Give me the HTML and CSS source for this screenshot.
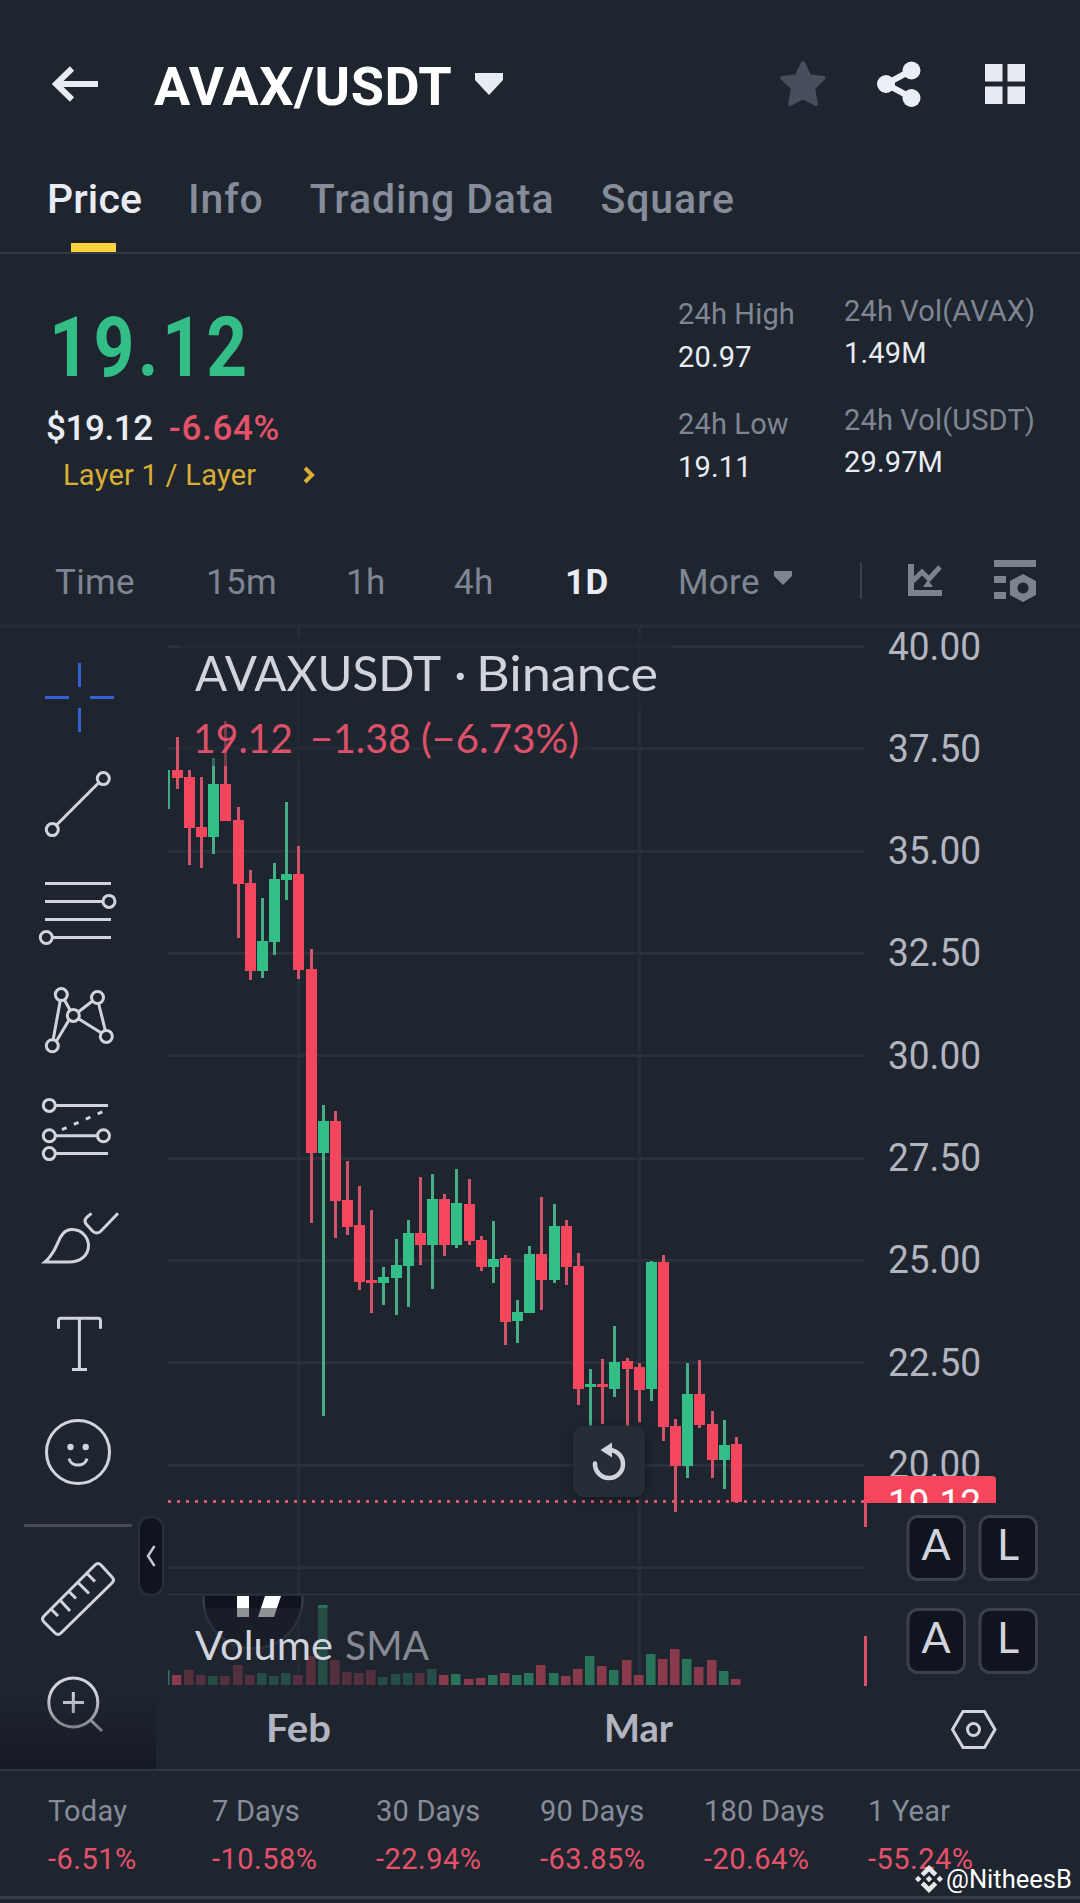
FILE: index.html
```html
<!DOCTYPE html>
<html lang="en">
<head>
    <meta charset="UTF-8">
    <title>AVAX/USDT</title>
    <link rel="stylesheet" href="styles.css">
</head>
<body>
<header class="header">
    <svg class="back" width="46" height="36" viewBox="0 0 46 36"><path d="M20 2.5L4 18l16 15.5M4 18h42" fill="none" stroke="#e9ebf2" stroke-width="6"/></svg>
    <h1 class="pair">AVAX/USDT</h1>
    <svg width="28" height="22" viewBox="0 0 28 22"><path d="M0 0h28v7L14 22 0 7z" fill="#e9ebf2"/></svg>
    <div class="header-actions">
        <svg width="46" height="48" viewBox="0 0 46 48"><path d="M23 3l6.300 13.200 14.200 1.800-10.400 10L35.900 44 23 37.200 10.100 44l2.800-16L2.500 18l14.200-1.800z" fill="#474f5d" stroke="#474f5d" stroke-width="4" stroke-linejoin="round"/></svg>
        <svg class="share" width="44" height="48" viewBox="0 0 44 48"><path d="M35 10L9 24l26 14" fill="none" stroke="#eceef5" stroke-width="6"/><g fill="#eceef5"><circle cx="34.500" cy="10.500" r="9"/><circle cx="9" cy="24" r="9"/><circle cx="34.500" cy="38" r="9"/></g></svg>
        <svg class="tiles" width="40" height="40" viewBox="0 0 40 40"><path d="M0 0h17.500v17.500H0zM22.500 0H40v17.500H22.500zM0 22.500h17.500V40H0zM22.500 22.500H40V40H22.500z" fill="#e9ebf2"/></svg>
    </div>
</header>

<nav class="tabs">
    <a class="tab active">Price</a>
    <a class="tab">Info</a>
    <a class="tab">Trading Data</a>
    <a class="tab">Square</a>
</nav>

<section class="ticker">
    <div class="ticker-main">
        <div class="last-price">19.12</div>
        <div class="fiat"><span class="fiat-price">$19.12</span><span class="change">-6.64%</span></div>
        <div class="tag">Layer 1 / Layer
            <svg width="12" height="18" viewBox="0 0 12 18"><path d="M2 2l7 7-7 7" fill="none" stroke="#d9ae33" stroke-width="4"/></svg>
        </div>
    </div>
    <dl class="stats">
        <dt>24h High</dt>
        <dd>20.97</dd>
        <dt>24h Low</dt>
        <dd>19.11</dd>
    </dl>
    <dl class="stats stats-vol">
        <dt>24h Vol(AVAX)</dt>
        <dd>1.49M</dd>
        <dt>24h Vol(USDT)</dt>
        <dd>29.97M</dd>
    </dl>
</section>

<nav class="intervals">
    <a>Time</a>
    <a>15m</a>
    <a>1h</a>
    <a>4h</a>
    <a class="active">1D</a>
    <a>More <svg class="caret" width="18" height="14" viewBox="0 0 18 14"><path d="M0 0h18v5L9 14 0 5z" fill="#7f8593"/></svg></a>
    <span class="separator"></span>
    <svg class="interval-icon" width="34" height="34" viewBox="0 0 34 34"><path d="M3 0v29h31" fill="none" stroke="#7b8290" stroke-width="6"/><path d="M5 17l9-9 7 7L32 3" fill="none" stroke="#7b8290" stroke-width="5"/><path d="M20 16l-5 7h10z" fill="#7b8290"/></svg>
    <svg class="interval-icon" width="42" height="42" viewBox="0 0 42 42"><path d="M0 0h42v7H0zM0 16h12v7H0zM0 32h12v7H0z" fill="#7b8290"/><path fill-rule="evenodd" d="M29 14l13 7v14l-13 7-13-7V21zM29 22.500a5.500 5.500 0 1 0 .01 0z" fill="#7b8290"/></svg>
</nav>

<main class="chart">
    <div class="tools">
        <svg class="tool" viewBox="0 0 156 108"><path class="cross" d="M79.500 20v24M79.500 65v24M45 54.500h24M90 54.500h24"/></svg>
        <svg class="tool" viewBox="0 0 156 108"><circle cx="103.300" cy="27.600" r="6"/><circle cx="52.300" cy="78.600" r="6"/><path d="M98.500 32l-42 42"/></svg>
        <svg class="tool" viewBox="0 0 156 108"><path d="M45 24.600h66M45 42.400h58M45 60.600h66M53 78.500h58"/><circle cx="109" cy="42.400" r="6"/><circle cx="46.300" cy="78.500" r="6"/></svg>
        <svg class="tool" viewBox="0 0 156 108"><circle cx="61.300" cy="27.600" r="6"/><circle cx="97.500" cy="30.500" r="6"/><circle cx="73.300" cy="48.400" r="6"/><circle cx="106.300" cy="69.400" r="6"/><circle cx="52.300" cy="78.700" r="6"/><path d="M60.200 34l-7 38.500M64.500 33l5.500 10M56.500 74l12.500-21M78.300 45l14.200-11M98.700 37l6.500 26M78.500 51.800l22.500 14"/></svg>
        <svg class="tool" viewBox="0 0 156 108"><circle cx="49.300" cy="30.400" r="6"/><circle cx="49.300" cy="60.700" r="6"/><circle cx="103.500" cy="60.700" r="6"/><circle cx="49.300" cy="78.600" r="6"/><path d="M56 30.400h52M56 60.700h41M56 78.600h52"/><path d="M62 54.600l42-18.500" stroke-dasharray="5 8"/></svg>
        <svg class="tool" viewBox="0 0 156 108"><path d="M45 79C52 73 55 66 60 55c3-6 8-9 13-8.500 9 .5 15.500 8 15.500 16 0 9-7 16.500-19.500 16.500zM91.500 30.300l-4.500 3.700c-2.500 2.500-2.500 5.500 0 8l5.500 6c2.500 2.500 6 2.500 8.500 0L118 30.300"/></svg>
        <svg class="tool" viewBox="0 0 156 108"><path d="M58.500 37.700v-8q0-2.500 2.500-2.500h37q2.500 0 2.500 2.500v8M79.400 27.200v51M72 78.400h15"/></svg>
        <svg class="tool" viewBox="0 0 156 108"><circle cx="78" cy="53" r="31.500"/><circle class="dot" cx="70.500" cy="48" r="3.200"/><circle class="dot" cx="85.700" cy="48" r="3.200"/><path d="M69 59.600c2 8.500 16 8.500 18 0"/></svg>
        <hr class="tools-line">
        <svg class="tool tool-ruler" viewBox="0 0 156 122"><path d="M95 38q3-3 6 0l11 12q3 3 0 6L61 106q-3 3-6 0L44 95q-3-3 0-6zM51 82l7 7M60 73l10 11M69 64.500l7 7M78 55.500l11 11M87 46.500l8 8"/></svg>
        <svg class="tool tool-zoom" viewBox="0 0 156 119"><circle cx="73.300" cy="53.400" r="24.500"/><path d="M90.500 71L102 82M63 53.400h21M73.300 43v21"/></svg>
        <div class="tools-fade"></div>
        <button class="collapse"><svg width="10" height="22" viewBox="0 0 10 22"><path d="M8.500 1L2 11l6.500 10" fill="none" stroke="#c3c6d0" stroke-width="2.500"/></svg></button>
    </div>

    <svg class="plot" viewBox="156 628 924 1141">
        <defs>
            <clipPath id="lower-pane"><rect x="168" y="1596" width="700" height="90"/></clipPath>
            <clipPath id="price-label"><path d="M864 1476h128q4 0 4 4v23H864z"/></clipPath>
        </defs>
        <g id="grid"></g>
        <path class="pane-line" d="M168 1594.500h912"/>

        <!-- TradingView mark, cut by the pane border -->
        <g clip-path="url(#lower-pane)">
            <circle cx="253" cy="1599" r="49.500" fill="#10141f" stroke="#363b46" stroke-width="2.500"/>
            <path d="M237 1596h12v21h-12zM265 1596h16l-7 21h-16z" fill="#fff"/>
        </g>

        <g id="volume"><rect x="168" y="1670" width="1.500" height="15" fill="#2a735b"/></g>
        <g id="candles"><rect x="168" y="770" width="2" height="39" fill="#3fae83"/></g>

        <path class="price-line" d="M168 1501.500h696"/>
        <g class="veil">
            <rect x="180" y="636" width="492" height="72"/>
            <rect x="180" y="708" width="412" height="58"/>
            <rect x="181" y="1608" width="257" height="79"/>
        </g>

        <g class="legend-title">
            <text x="195" y="691" textLength="246" lengthAdjust="spacingAndGlyphs">AVAXUSDT</text>
            <text x="454" y="691">·</text>
            <text x="476" y="691" textLength="182" lengthAdjust="spacingAndGlyphs">Binance</text>
        </g>
        <g class="legend-change">
            <text x="193" y="753" textLength="100" lengthAdjust="spacingAndGlyphs">19.12</text>
            <text x="310" y="753" textLength="101" lengthAdjust="spacingAndGlyphs">−1.38</text>
            <text x="421" y="753" textLength="158" lengthAdjust="spacingAndGlyphs">(−6.73%)</text>
        </g>
        <text class="legend-volume" x="195" y="1660" textLength="138" lengthAdjust="spacingAndGlyphs">Volume</text>
        <text class="legend-sma" x="345" y="1660" textLength="84" lengthAdjust="spacingAndGlyphs">SMA</text>

        <g id="prices"></g>
        <g clip-path="url(#price-label)">
            <rect x="864" y="1476" width="132" height="27" fill="#f6465d"/>
            <text class="price now" x="888" y="1517" textLength="93" lengthAdjust="spacingAndGlyphs">19.12</text>
        </g>
        <path class="tick" d="M865.500 1503v24M865.500 1636v50"/>

        <text class="month" x="266" y="1742" textLength="65" lengthAdjust="spacingAndGlyphs">Feb</text>
        <text class="month" x="604" y="1742" textLength="69" lengthAdjust="spacingAndGlyphs">Mar</text>

        <g class="scale-button">
            <rect x="908" y="1516.500" width="56.500" height="63" rx="10"/><text x="936" y="1560">A</text>
            <rect x="980" y="1516.500" width="56.500" height="63" rx="10"/><text x="1008" y="1560">L</text>
            <rect x="908" y="1609.500" width="56.500" height="63" rx="10"/><text x="936" y="1653">A</text>
            <rect x="980" y="1609.500" width="56.500" height="63" rx="10"/><text x="1008" y="1653">L</text>
        </g>
        <g fill="none" stroke="#d1d4dc" stroke-width="3">
            <path d="M963 1711.500h21.500l10.500 18-10.500 18H963l-10.500-18z"/>
            <circle cx="973.500" cy="1729.500" r="6"/>
        </g>

        <!-- reset button -->
        <rect class="reset" x="573" y="1425.500" width="72" height="71.500" rx="11"/>
        <path d="M595 1463.500a14 14 0 1 0 14-13.500" fill="none" stroke="#d1d4dc" stroke-width="4.500" stroke-linecap="round"/>
        <path d="M600.500 1450l11.500-7.500v15z" fill="#d1d4dc"/>
    </svg>
</main>

<footer class="periods">
    <div class="period"><span>Today</span><b>-6.51%</b></div>
    <div class="period"><span>7 Days</span><b>-10.58%</b></div>
    <div class="period"><span>30 Days</span><b>-22.94%</b></div>
    <div class="period"><span>90 Days</span><b>-63.85%</b></div>
    <div class="period"><span>180 Days</span><b>-20.64%</b></div>
    <div class="period"><span>1 Year</span><b>-55.24%</b></div>
    <div class="author">
        <svg width="28" height="28" viewBox="0 0 28 28" fill="#e8e8ea"><path d="M14 0l8.300 8.300-3.200 3.200L14 6.400l-5.100 5.100-3.200-3.200zM14 28l-8.300-8.300 3.200-3.200 5.100 5.100 5.100-5.100 3.200 3.200zM3.200 10.800L6.400 14l-3.200 3.200L0 14zM24.800 10.800L28 14l-3.200 3.200-3.200-3.200zM14 10.800l3.200 3.200-3.200 3.200-3.200-3.200z"/></svg>
        <span>@NitheesB</span>
    </div>
</footer>
<script src="script.js"></script>
</body>
</html>
```
FILE: styles.css
```css
* {
    box-sizing: border-box;
}

body {
    margin: 0;
    width: 1080px;
    height: 1903px;
    overflow: hidden;
    background-color: #1f252f;
    color: #eaecf3;
    font-family: Roboto, "Liberation Sans", sans-serif;
}

svg {
    display: block;
    flex: none;
}

/* Header */
.header {
    height: 168px;
    padding: 0 55px 0 52px;
    display: flex;
    align-items: center;
}

.pair {
    margin: 0 23px 0 56px;
    padding-top: 5px;
    font-size: 54px;
    line-height: 64px;
    font-weight: 700;
    letter-spacing: 0.5px;
    color: #fff;
}

.header-actions {
    margin-left: auto;
    display: flex;
    align-items: center;
}

.share {
    margin-left: 51px;
}

.tiles {
    margin-left: 64px;
}

/* Tabs */
.tabs {
    height: 86px;
    padding-left: 47px;
    display: flex;
    gap: 46px;
    border-bottom: 2px solid #343b47;
}

.tab {
    position: relative;
    font-size: 41px;
    line-height: 62px;
    font-weight: 500;
    letter-spacing: 0.9px;
    color: #868c99;
}

.tab.active {
    letter-spacing: 0.1px;
    color: #eaecf3;
}

.tab.active::after {
    content: "";
    position: absolute;
    left: 24px;
    bottom: 0;
    width: 45px;
    height: 9px;
    background-color: #f8d33d;
}

/* Ticker */
.ticker {
    height: 286px;
    padding-left: 46px;
    display: grid;
    grid-template-columns: 632px 166px 1fr;
}

.ticker-main {
    padding-top: 44px;
}

.last-price {
    width: 260px;
    margin-left: 3px;
    font-size: 83px;
    line-height: 100px;
    font-weight: 700;
    letter-spacing: 4px;
    transform: scaleX(0.86);
    transform-origin: left;
    color: #33bd87;
}

.fiat {
    margin-top: 11px;
    font-size: 35px;
    line-height: 40px;
    font-weight: 500;
    display: flex;
    gap: 16px;
}

.fiat-price {
    letter-spacing: -0.4px;
}

.change {
    letter-spacing: 0.7px;
    color: #e4526a;
}

.tag {
    margin: 6px 0 0 17px;
    font-size: 29px;
    line-height: 40px;
    letter-spacing: 0.25px;
    color: #d9ae33;
    display: flex;
    align-items: center;
    gap: 47px;
}

.stats {
    margin: 0;
    padding-top: 42px;
    font-size: 29px;
    line-height: 36px;
    letter-spacing: 0.15px;
    white-space: nowrap;
}

.stats-vol {
    padding-top: 39px;
}

.stats dt {
    color: #7f8593;
}

.stats dd {
    margin: 7px 0 31px;
}

.stats-vol dd {
    margin: 6px 0 31px;
}

/* Intervals */
.intervals {
    height: 84px;
    padding-left: 55px;
    display: grid;
    grid-template-columns: 151px 140px 108px 111px 113px 182px 48px 86px 1fr;
    align-items: center;
    font-size: 35px;
    line-height: 86px;
    letter-spacing: 0.3px;
    color: #7f8593;
}

.intervals .active {
    font-weight: 700;
    color: #eaecf3;
}

.interval-icon {
    margin-bottom: 4px;
}

.caret {
    display: inline-block;
    margin-left: 5px;
    vertical-align: 9px;
}

.separator {
    width: 2px;
    height: 36px;
    margin-bottom: 4px;
    background-color: #3a414d;
}

/* Chart */
.chart {
    position: relative;
    height: 1145px;
    border-top: 4px solid #252c36;
    display: flex;
}

.tools {
    position: relative;
    width: 156px;
    padding-top: 15px;
}

.tool {
    width: 156px;
    height: 108px;
    fill: none;
    stroke: #d1d4dc;
    stroke-width: 3;
}

.tool .cross {
    stroke: #3560d6;
}

.tool .dot {
    fill: #d1d4dc;
    stroke: none;
}

.tool-ruler {
    height: 122px;
}

.tool-zoom {
    height: 119px;
}

.tools-line {
    width: 108px;
    height: 3px;
    margin: 17px 0 0 24px;
    border: 0;
    background-color: #484b55;
}

.tools-fade {
    position: absolute;
    left: 0;
    right: 0;
    bottom: 0;
    height: 76px;
    background: linear-gradient(rgba(21, 25, 35, 0), rgba(21, 25, 35, 0.95));
}

.collapse {
    position: absolute;
    left: 138px;
    top: 888px;
    width: 26px;
    height: 80px;
    padding: 0;
    display: flex;
    align-items: center;
    justify-content: center;
    background-color: #10141f;
    border: 2px solid #2b303b;
    border-radius: 12px;
}

.plot {
    width: 924px;
    height: 1141px;
}

.grid-x {
    stroke: #2a303b;
    stroke-width: 3;
}

.grid-y {
    stroke: #272e38;
    stroke-width: 3;
}

.pane-line {
    stroke: #2c323d;
    stroke-width: 2;
}

.price-line {
    stroke: #d9566b;
    stroke-width: 3;
    stroke-dasharray: 3 6;
}

.tick {
    stroke: #dd5069;
    stroke-width: 3;
}

.veil {
    fill: #1f252f;
    opacity: 0.5;
}

.legend-title,
.legend-change,
.legend-volume,
.legend-sma,
.month,
.scale-button {
    font-family: Lato, sans-serif;
}

.legend-title {
    font-size: 48.5px;
    fill: #d1d4dc;
}

.legend-change {
    font-size: 40.5px;
    fill: #dd5069;
}

.legend-volume {
    font-size: 40px;
    fill: #d1d4dc;
}

.legend-sma {
    font-size: 40px;
    fill: #868a95;
}

.month {
    font-size: 37.5px;
    font-weight: 700;
    fill: #b2b5c0;
}

.price {
    font-size: 38px;
    fill: #b2b5c0;
}

.price.now {
    fill: #fff;
}

.scale-button rect {
    fill: #10141f;
    stroke: #3c404a;
    stroke-width: 3;
}

.scale-button text {
    font-size: 43px;
    fill: #d1d4dc;
    text-anchor: middle;
}

.reset {
    fill: #272d37;
    filter: drop-shadow(0 2px 4px rgba(0, 0, 0, 0.4));
}

/* Footer */
.periods {
    position: relative;
    height: 130px;
    padding: 22px 0 0 48px;
    display: grid;
    grid-template-columns: repeat(6, 164px);
    align-content: start;
    border-top: 2px solid #303741;
    border-bottom: 3px solid #363d49;
    font-size: 29px;
    line-height: 36px;
}

.period span {
    display: block;
    letter-spacing: 0.2px;
    color: #868c99;
}

.period b {
    display: block;
    margin-top: 12px;
    font-weight: 400;
    letter-spacing: 0.5px;
    color: #e4526a;
}

.author {
    position: absolute;
    left: 915px;
    top: 90px;
    display: flex;
    align-items: center;
    gap: 3px;
    font-size: 25.5px;
    color: #fff;
}
```
FILE: script.js
```js
// high, body top, body bottom, low (y on the plot), volume height, 1 = up
const candles = [
    [737, 770, 778, 789, 10, 0], [770, 777, 828, 865, 15, 0], [777, 827, 837, 868, 10, 0],
    [758, 784, 837, 854, 9, 1], [721, 784, 821, 821, 9, 0], [807, 820, 884, 938, 20, 0],
    [870, 883, 971, 980, 10, 0], [898, 941, 971, 978, 12, 1], [863, 879, 942, 955, 9, 1],
    [802, 874, 880, 900, 12, 1], [846, 874, 970, 979, 10, 0], [949, 969, 1153, 1223, 29, 0],
    [1105, 1121, 1153, 1416, 80, 1], [1111, 1121, 1201, 1238, 25, 0], [1161, 1200, 1227, 1235, 13, 0],
    [1186, 1225, 1282, 1290, 12, 0], [1210, 1280, 1283, 1313, 15, 0], [1267, 1277, 1283, 1305, 8, 1],
    [1239, 1265, 1278, 1315, 11, 1], [1220, 1233, 1266, 1307, 12, 1], [1177, 1233, 1245, 1265, 12, 0],
    [1174, 1199, 1245, 1289, 16, 1], [1194, 1199, 1245, 1256, 10, 0], [1169, 1203, 1245, 1248, 11, 1],
    [1179, 1204, 1241, 1245, 6, 0], [1236, 1240, 1267, 1271, 7, 0], [1221, 1259, 1267, 1283, 10, 1],
    [1255, 1258, 1322, 1345, 12, 0], [1300, 1312, 1321, 1343, 10, 1], [1246, 1254, 1313, 1313, 12, 1],
    [1197, 1254, 1280, 1310, 20, 0], [1204, 1226, 1280, 1283, 12, 1], [1220, 1226, 1267, 1285, 9, 0],
    [1253, 1266, 1389, 1405, 16, 0], [1369, 1384, 1387, 1430, 29, 1], [1359, 1384, 1387, 1424, 19, 0],
    [1326, 1362, 1389, 1397, 15, 1], [1358, 1361, 1369, 1430, 25, 0], [1363, 1367, 1390, 1422, 10, 0],
    [1261, 1262, 1389, 1401, 31, 1], [1255, 1262, 1427, 1441, 26, 0], [1419, 1426, 1466, 1512, 36, 0],
    [1363, 1394, 1466, 1478, 26, 1], [1360, 1394, 1425, 1428, 18, 0], [1411, 1424, 1460, 1478, 25, 0],
    [1420, 1445, 1460, 1489, 14, 1], [1437, 1444, 1502, 1502, 6, 0]
];

function rect(x, y, w, h, fill) {
    return `<rect x="${x}" y="${y}" width="${w}" height="${h}" fill="${fill}"/>`;
}

let bodies = '';
let volumes = '';
candles.forEach(([high, top, bottom, low, volume, up], i) => {
    const x = Math.round(176.8 + i * 12.155);
    bodies += rect(x - 1, high, 3, low - high, up ? '#45ae86' : '#d2536a');
    bodies += rect(x - 5, top, 11, bottom - top, up ? '#33bd87' : '#f6465d');
    volumes += rect(x - 5, 1685 - volume, 9.5, volume, up ? '#2a735b' : '#893b4c');
});
document.getElementById('candles').innerHTML += bodies;
document.getElementById('volume').innerHTML += volumes;

// Grid and price scale, one line every 2.50
let grid = '<path class="grid-y" d="M298.5 628v1057M639.5 628v1057"/>';
let prices = '';
for (let i = 0; i < 10; i++) {
    const y = 646.5 + i * 102.33;
    grid += `<path class="grid-x" d="M168 ${Math.floor(y) + 0.5}h696"/>`;
    if (i < 9) {
        prices += `<text class="price" x="888" y="${Math.round(y + 13)}" textLength="93" lengthAdjust="spacingAndGlyphs">${(40 - i * 2.5).toFixed(2)}</text>`;
    }
}
document.getElementById('grid').innerHTML = grid;
document.getElementById('prices').innerHTML = prices;
```
